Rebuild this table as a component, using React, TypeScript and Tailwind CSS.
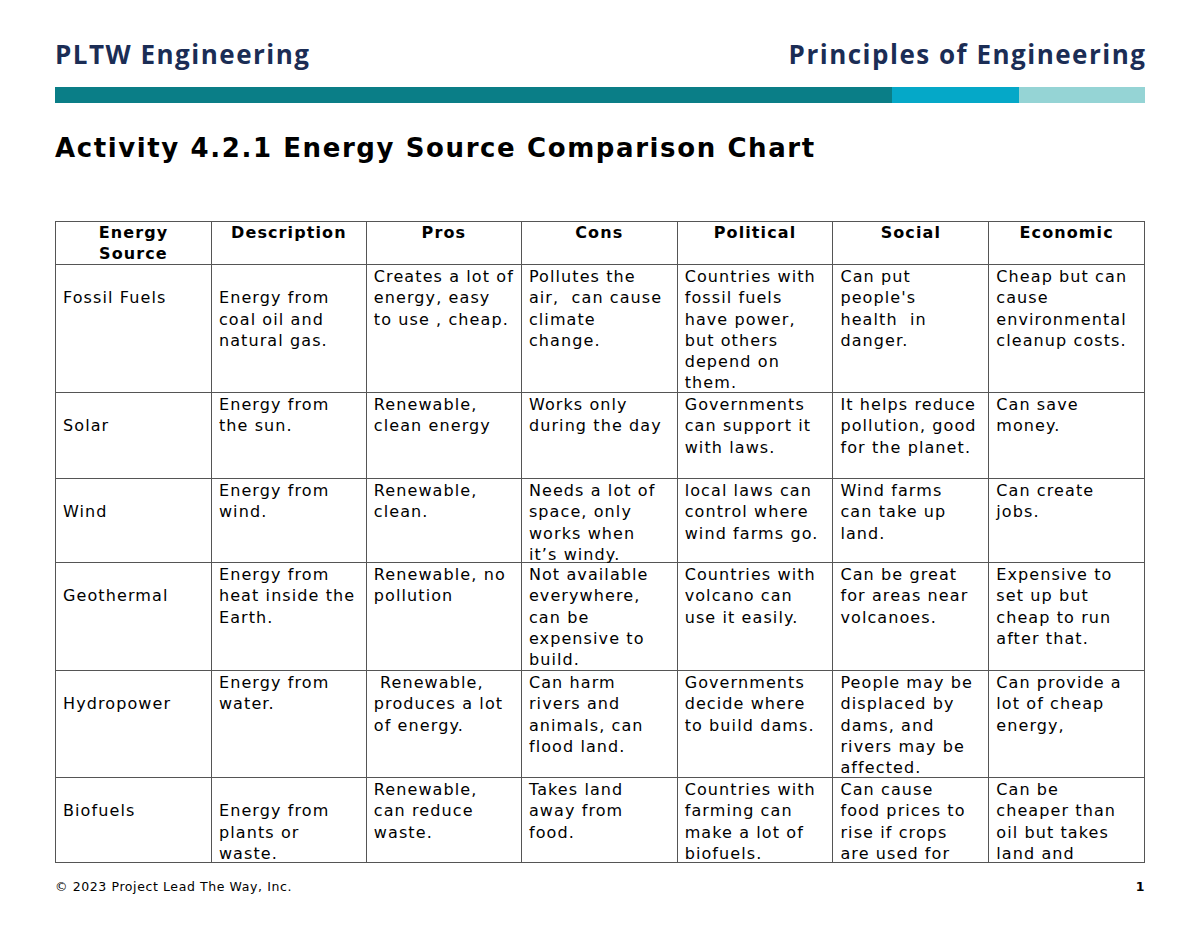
const cols = ["Energy\nSource", "Description", "Pros", "Cons", "Political", "Social", "Economic"];
const colWidths = ["w-[157px]", "w-[155px]", "w-[155px]", "w-[156px]", "w-[156px]", "w-[156px]", "w-[156px]"];

// each cell is a list of lines; "" is a blank line as in the source document
const rows: { h: string; cells: string[][] }[] = [
  {
    h: "h-[127px]",
    cells: [
      ["", "Fossil Fuels"],
      ["", "Energy from", "coal oil and", "natural gas."],
      ["Creates a lot of", "energy, easy", "to use , cheap."],
      ["Pollutes the", "air,  can cause", "climate", "change."],
      ["Countries with", "fossil fuels", "have power,", "but others", "depend on", "them."],
      ["Can put", "people's", "health  in", "danger."],
      ["Cheap but can", "cause", "environmental", "cleanup costs."],
    ],
  },
  {
    h: "h-[85px]",
    cells: [
      ["", "Solar"],
      ["Energy from", "the sun."],
      ["Renewable,", "clean energy"],
      ["Works only", "during the day"],
      ["Governments", "can support it", "with laws."],
      ["It helps reduce", "pollution, good", "for the planet."],
      ["Can save", "money."],
    ],
  },
  {
    h: "h-[83px]",
    cells: [
      ["", "Wind"],
      ["Energy from", "wind."],
      ["Renewable,", "clean."],
      ["Needs a lot of", "space, only", "works when", "it’s windy."],
      ["local laws can", "control where", "wind farms go."],
      ["Wind farms", "can take up", "land."],
      ["Can create", "jobs."],
    ],
  },
  {
    h: "h-[107px]",
    cells: [
      ["", "Geothermal"],
      ["Energy from", "heat inside the", "Earth."],
      ["Renewable, no", "pollution"],
      ["Not available", "everywhere,", "can be", "expensive to", "build."],
      ["Countries with", "volcano can", "use it easily."],
      ["Can be great", "for areas near", "volcanoes."],
      ["Expensive to", "set up but", "cheap to run", "after that."],
    ],
  },
  {
    h: "h-[106px]",
    cells: [
      ["", "Hydropower"],
      ["Energy from", "water."],
      ["\u00a0Renewable,", "produces a lot", "of energy."],
      ["Can harm", "rivers and", "animals, can", "flood land."],
      ["Governments", "decide where", "to build dams."],
      ["People may be", "displaced by", "dams, and", "rivers may be", "affected."],
      ["Can provide a", "lot of cheap", "energy,"],
    ],
  },
  {
    h: "h-[84px]",
    cells: [
      ["", "Biofuels"],
      ["", "Energy from", "plants or", "waste."],
      ["Renewable,", "can reduce", "waste."],
      ["Takes land", "away from", "food."],
      ["Countries with", "farming can", "make a lot of", "biofuels."],
      ["Can cause", "food prices to", "rise if crops", "are used for"],
      ["Can be", "cheaper than", "oil but takes", "land and"],
    ],
  },
];

function Lines({ lines }: { lines: string[] }) {
  return (
    <>
      {lines.map((line, i) => (
        <div key={i} className="h-[21.3px] whitespace-pre">
          {line === "" ? "\u00a0" : line}
        </div>
      ))}
    </>
  );
}

export default function App() {
  return (
    <div className="relative h-[927px] w-[1200px] overflow-hidden bg-white font-['DejaVu_Sans',sans-serif] text-black">
      <div className="px-[55px] pt-[38px]">
        <div className="flex items-center justify-between font-['Open_Sans',sans-serif] text-[26px] leading-[32px] font-bold tracking-[1.5px] text-[#1b2d55]">
          <span>PLTW Engineering</span>
          <span className="-mr-[1.5px]">Principles of Engineering</span>
        </div>

        <div className="mt-[17px] flex h-[16px]">
          <div className="w-[837px] bg-[#0a7e87]" />
          <div className="w-[127px] bg-[#05a8c8]" />
          <div className="flex-1 bg-[#95d4d5]" />
        </div>

        <h1 className="mt-[28px] text-[26px] leading-[34px] font-bold tracking-[1.6px]">
          Activity 4.2.1 Energy Source Comparison Chart
        </h1>

        <table className="mt-[56px] table-fixed border-collapse text-[16px] leading-[21.3px] tracking-[1.1px]">
          <thead>
            <tr>
              {cols.map((c, i) => (
                <th
                  key={c}
                  className={`${colWidths[i]} border-[1.5px] border-[#555] p-0 align-top text-center font-bold`}
                >
                  <div className="h-[42px] px-[7px]">
                    <Lines lines={c.split("\n")} />
                  </div>
                </th>
              ))}
            </tr>
          </thead>
          <tbody>
            {rows.map((row, r) => (
              <tr key={r}>
                {row.cells.map((cell, i) => (
                  <td
                    key={i}
                    className={`${colWidths[i]} border-[1.5px] border-[#555] p-0 align-top`}
                  >
                    <div className={`${row.h} px-[7px] pt-[1px]`}>
                      <Lines lines={cell} />
                    </div>
                  </td>
                ))}
              </tr>
            ))}
          </tbody>
        </table>

        <div className="mt-[16px] flex items-center justify-between text-[12.5px] leading-[16px] tracking-[0.6px]">
          <span>© 2023 Project Lead The Way, Inc.</span>
          <span className="font-bold">1</span>
        </div>
      </div>
    </div>
  );
}
